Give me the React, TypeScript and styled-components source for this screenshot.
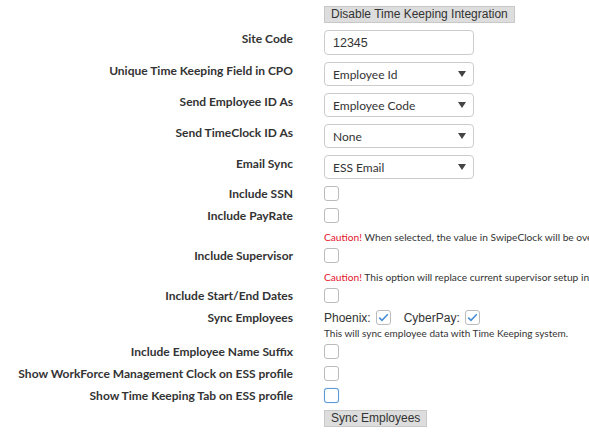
import styled, { createGlobalStyle } from "styled-components";

const GlobalStyle = createGlobalStyle`
  html, body {
    margin: 0;
    padding: 0;
    background: #fff;
    overflow: hidden;
  }
  body {
    font-family: Lato, "Noto Sans", sans-serif;
    color: #333;
  }
`;

const Form = styled.div`
  display: flex;
  flex-direction: column;
  gap: 7px;
  padding-top: 6px;
  width: 900px;
`;

const Row = styled.div`
  display: grid;
  grid-template-columns: 293px 1fr;
  column-gap: 31px;
  align-items: start;
`;

const Label = styled.label<{ $pad?: number }>`
  text-align: right;
  font-size: 12px;
  font-weight: 700;
  line-height: 15px;
  padding-top: ${(p) => p.$pad ?? 0}px;
  white-space: nowrap;
  color: #333;
`;

const Control = styled.div`
  display: flex;
  flex-direction: column;
  align-items: flex-start;
`;

const Inline = styled.div`
  display: flex;
  align-items: center;
  height: 15px;
`;

const GrayButton = styled.button`
  font-family: "Liberation Sans", Arial, sans-serif;
  font-size: 12px;
  color: #333;
  background: #ddd;
  border: 1px solid #c8c8c8;
  border-radius: 0;
  height: 17px;
  line-height: 15px;
  padding: 0 6px;
  margin: 0;
`;

const TextInput = styled.input`
  box-sizing: border-box;
  width: 150px;
  height: 25px;
  border: 1px solid #ccc;
  border-radius: 4px;
  padding: 0 8px;
  font-family: "Liberation Sans", Arial, sans-serif;
  font-size: 12.5px;
  color: #333;
  outline: none;
`;

const SelectBox = styled.div`
  box-sizing: border-box;
  width: 150px;
  height: 24px;
  border: 1px solid #ccc;
  border-radius: 4px;
  padding: 0 7px 0 8px;
  display: flex;
  align-items: center;
  justify-content: space-between;
  font-size: 12px;
  color: #333;
`;

const Arrow = styled.span`
  width: 0;
  height: 0;
  border-left: 4px solid transparent;
  border-right: 4px solid transparent;
  border-top: 6px solid #444;
`;

const Box = styled.span<{ $focus?: boolean }>`
  box-sizing: border-box;
  width: 15px;
  height: 15px;
  border: 1px solid ${(p) => (p.$focus ? "#5a9ad8" : "#bbb")};
  border-radius: 3px;
  background: #fff;
  display: inline-flex;
  align-items: center;
  justify-content: center;
  box-shadow: ${(p) => (p.$focus ? "0 0 1px #8dbbe8" : "none")};
`;

const Hint = styled.div<{ $top?: number; $size?: number }>`
  font-size: ${(p) => p.$size ?? 10.2}px;
  line-height: 14px;
  margin-top: ${(p) => p.$top ?? 7}px;
  margin-bottom: -3px;
  white-space: nowrap;
  color: #333;
`;

const Caution = styled.span`
  color: #e5132b;
`;

const InlineText = styled.span<{ $gap?: number }>`
  font-family: "Liberation Sans", Arial, sans-serif;
  font-size: 12px;
  color: #333;
  margin-left: ${(p) => p.$gap ?? 0}px;
  margin-right: 5px;
`;

function Checkbox({ checked, focus }: { checked?: boolean; focus?: boolean }) {
  return (
    <Box $focus={focus}>
      {checked && (
        <svg width="11" height="9" viewBox="0 0 11 9">
          <path d="M1.2 4.6 L4 7.4 L9.8 1.2" fill="none" stroke="#4a8fd6" strokeWidth="1.6" />
        </svg>
      )}
    </Box>
  );
}

function Select({ value }: { value: string }) {
  return (
    <SelectBox>
      <span>{value}</span>
      <Arrow />
    </SelectBox>
  );
}

const selects = [
  ["Unique Time Keeping Field in CPO", "Employee Id"],
  ["Send Employee ID As", "Employee Code"],
  ["Send TimeClock ID As", "None"],
  ["Email Sync", "ESS Email"],
];

export default function App() {
  return (
    <>
      <GlobalStyle />
      <Form>
        <Row>
          <span />
          <Control>
            <GrayButton>Disable Time Keeping Integration</GrayButton>
          </Control>
        </Row>
        <Row>
          <Label $pad={1}>Site Code</Label>
          <Control>
            <TextInput defaultValue="12345" />
          </Control>
        </Row>
        {selects.map(([label, value]) => (
          <Row key={label}>
            <Label $pad={1}>{label}</Label>
            <Control>
              <Select value={value} />
            </Control>
          </Row>
        ))}
        <Row>
          <Label>Include SSN</Label>
          <Control>
            <Checkbox />
          </Control>
        </Row>
        <Row>
          <Label>Include PayRate</Label>
          <Control>
            <Checkbox />
            <Hint>
              <Caution>Caution!</Caution> When selected, the value in SwipeClock will be overwritten by the value in CPO.
            </Hint>
          </Control>
        </Row>
        <Row>
          <Label>Include Supervisor</Label>
          <Control>
            <Checkbox />
            <Hint>
              <Caution>Caution!</Caution> This option will replace current supervisor setup in SwipeClock.
            </Hint>
          </Control>
        </Row>
        <Row>
          <Label>Include Start/End Dates</Label>
          <Control>
            <Checkbox />
          </Control>
        </Row>
        <Row>
          <Label>Sync Employees</Label>
          <Control>
            <Inline>
              <InlineText>Phoenix:</InlineText>
              <Checkbox checked />
              <InlineText $gap={13}>CyberPay:</InlineText>
              <Checkbox checked />
            </Inline>
            <Hint $top={1} $size={10}>This will sync employee data with Time Keeping system.</Hint>
          </Control>
        </Row>
        <Row>
          <Label>Include Employee Name Suffix</Label>
          <Control>
            <Checkbox />
          </Control>
        </Row>
        <Row>
          <Label>Show WorkForce Management Clock on ESS profile</Label>
          <Control>
            <Checkbox />
          </Control>
        </Row>
        <Row>
          <Label>Show Time Keeping Tab on ESS profile</Label>
          <Control>
            <Checkbox focus />
          </Control>
        </Row>
        <Row>
          <span />
          <Control>
            <GrayButton>Sync Employees</GrayButton>
          </Control>
        </Row>
      </Form>
    </>
  );
}
